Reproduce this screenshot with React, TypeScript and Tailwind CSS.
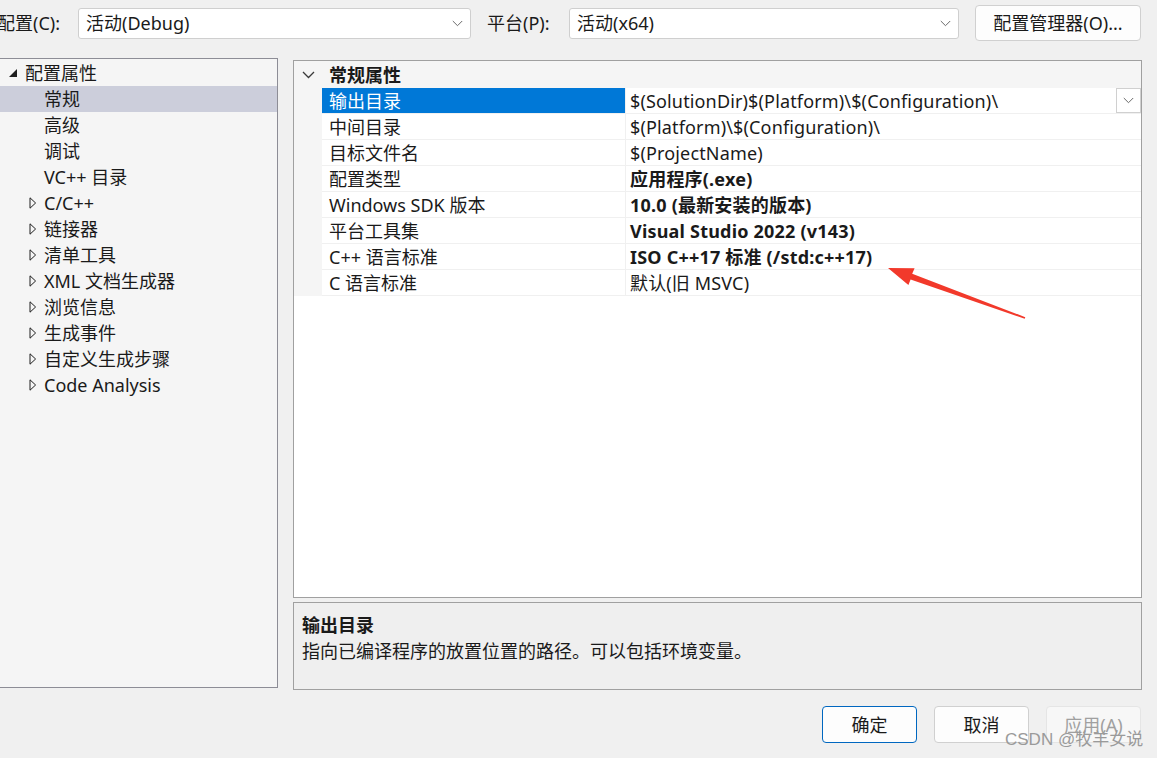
import React from "react";

function DropChevron() {
  return (
    <svg width="11" height="7" viewBox="0 0 11 7" className="shrink-0">
      <path d="M0.8 1 L5.5 5.7 L10.2 1" fill="none" stroke="#6a6a6a" strokeWidth="1" />
    </svg>
  );
}

function Dropdown({ text, width }: { text: string; width: string }) {
  return (
    <div className={`${width} h-[31px] bg-white border border-[#cfcfcf] rounded-[3px] flex items-center pl-[7px] pr-[7px] justify-between`}>
      <span>{text}</span>
      <DropChevron />
    </div>
  );
}

function Collapsed() {
  return (
    <svg width="8" height="12" viewBox="0 0 8 12" className="shrink-0">
      <path d="M1 0.8 L6.6 6 L1 11.2 Z" fill="none" stroke="#1e1e1e" strokeWidth="1" />
    </svg>
  );
}

function Expanded() {
  return (
    <svg width="10" height="10" viewBox="0 0 10 10" className="shrink-0">
      <path d="M9 1 L9 9 L1 9 Z" fill="#1e1e1e" />
    </svg>
  );
}

const treeChildren: { label: string; expandable: boolean; selected?: boolean }[] = [
  { label: "常规", expandable: false, selected: true },
  { label: "高级", expandable: false },
  { label: "调试", expandable: false },
  { label: "VC++ 目录", expandable: false },
  { label: "C/C++", expandable: true },
  { label: "链接器", expandable: true },
  { label: "清单工具", expandable: true },
  { label: "XML 文档生成器", expandable: true },
  { label: "浏览信息", expandable: true },
  { label: "生成事件", expandable: true },
  { label: "自定义生成步骤", expandable: true },
  { label: "Code Analysis", expandable: true },
];

const props: { name: string; value: string; bold?: boolean; selected?: boolean }[] = [
  { name: "输出目录", value: "$(SolutionDir)$(Platform)\\$(Configuration)\\", selected: true },
  { name: "中间目录", value: "$(Platform)\\$(Configuration)\\" },
  { name: "目标文件名", value: "$(ProjectName)" },
  { name: "配置类型", value: "应用程序(.exe)", bold: true },
  { name: "Windows SDK 版本", value: "10.0 (最新安装的版本)", bold: true },
  { name: "平台工具集", value: "Visual Studio 2022 (v143)", bold: true },
  { name: "C++ 语言标准", value: "ISO C++17 标准 (/std:c++17)", bold: true },
  { name: "C 语言标准", value: "默认(旧 MSVC)" },
];

export default function App() {
  return (
    <div className="relative w-[1157px] h-[758px] overflow-hidden bg-[#f0f0f0] text-[#1a1a1a] text-[18px] leading-none font-['Noto_Sans','Noto_Sans_CJK_SC',sans-serif]">
      {/* top row */}
      <div className="flex items-center h-[46px]">
        <span className="ml-[-3px] w-[81px] shrink-0">配置(C):</span>
        <Dropdown text="活动(Debug)" width="w-[393px]" />
        <span className="ml-[16px] w-[82px] shrink-0">平台(P):</span>
        <Dropdown text="活动(x64)" width="w-[390px]" />
        <div className="ml-[16px] w-[166px] h-[36px] bg-[#fdfdfd] border border-[#d0d0d0] rounded-[4px] flex items-center justify-center">
          配置管理器(O)...
        </div>
      </div>

      {/* main */}
      <div className="flex items-start mt-[12px]">
        <div className="ml-[-1px] w-[279px] h-[630px] border border-[#8d8d96] bg-[#f5f5f5] pt-[1px] shrink-0">
          <div className="h-[26px] flex items-center">
            <div className="ml-[8px] w-[17px]"><Expanded /></div>
            <span>配置属性</span>
          </div>
          {treeChildren.map((c) => (
            <div
              key={c.label}
              className={`h-[26px] flex items-center ${c.selected ? "bg-[#cccedb]" : ""}`}
            >
              <div className="ml-[29px] w-[15px]">{c.expandable ? <Collapsed /> : null}</div>
              <span>{c.label}</span>
            </div>
          ))}
        </div>

        <div className="ml-[15px] mt-[2px] flex flex-col">
          {/* property grid */}
          <div className="w-[849px] h-[538px] border border-[#a0a0a0] bg-white">
            <div className="h-[27px] bg-[#f5f5f5] flex items-center">
              <div className="w-[28px] flex justify-center pl-[1px]">
                <svg width="13" height="8" viewBox="0 0 13 8">
                  <path d="M1 1 L6.5 6.5 L12 1" fill="none" stroke="#3a3a3a" strokeWidth="1.3" />
                </svg>
              </div>
              <span className="font-bold ml-[7px]">常规属性</span>
            </div>
            {props.map((p) => (
              <div key={p.name} className="h-[26px] flex">
                <div className="w-[28px] bg-[#f5f5f5] shrink-0" />
                <div
                  className={`w-[303px] shrink-0 flex items-center pl-[7px] border-b border-[#f0f0f0] ${
                    p.selected ? "bg-[#0078d7] text-white border-[#0078d7]" : ""
                  }`}
                >
                  {p.name}
                </div>
                <div className="flex-1 flex items-center justify-between pl-[4px] border-l border-b border-[#f0f0f0]">
                  <span className={p.bold ? "font-bold tracking-[0.2px]" : "tracking-[0.15px]"}>{p.value}</span>
                  {p.selected ? (
                    <div className="w-[25px] h-[25px] border border-[#d0d0d0] bg-white flex items-center justify-center">
                      <DropChevron />
                    </div>
                  ) : null}
                </div>
              </div>
            ))}
          </div>

          {/* description */}
          <div className="mt-[4px] w-[849px] h-[88px] border border-[#a0a0a0] bg-[#efefef] pl-[8px] pt-[9px]">
            <div className="font-bold h-[26px] flex items-center">输出目录</div>
            <div className="h-[26px] flex items-center">指向已编译程序的放置位置的路径。可以包括环境变量。</div>
          </div>
        </div>
      </div>

      {/* buttons */}
      <div className="flex justify-end gap-[17px] mt-[16px] mr-[16px]">
        <div className="w-[95px] h-[37px] border border-[#0067c0] rounded-[4px] bg-[#fdfdfd] flex items-center justify-center">确定</div>
        <div className="w-[95px] h-[37px] border border-[#d0d0d0] rounded-[4px] bg-[#fdfdfd] flex items-center justify-center">取消</div>
        <div className="w-[95px] h-[37px] border border-[#e5e5e5] rounded-[4px] bg-[#f7f7f7] text-[#a0a0a0] flex items-center justify-center">应用(A)</div>
      </div>

      {/* watermark */}
      <div className="absolute left-[1005px] top-[731px] text-[17px] text-[#9a9a9a] font-['Liberation_Sans','Noto_Sans_CJK_SC',sans-serif]">
        CSDN @牧羊女说
      </div>

      {/* red arrow annotation */}
      <svg className="absolute left-0 top-0 pointer-events-none" width="1157" height="758">
        <polygon
          points="888,268 914.6,268.2 912.2,273.7 1025.3,317.2 1024.7,318.8 910.6,279.4 908.4,285"
          fill="#f2392b"
        />
      </svg>
    </div>
  );
}
